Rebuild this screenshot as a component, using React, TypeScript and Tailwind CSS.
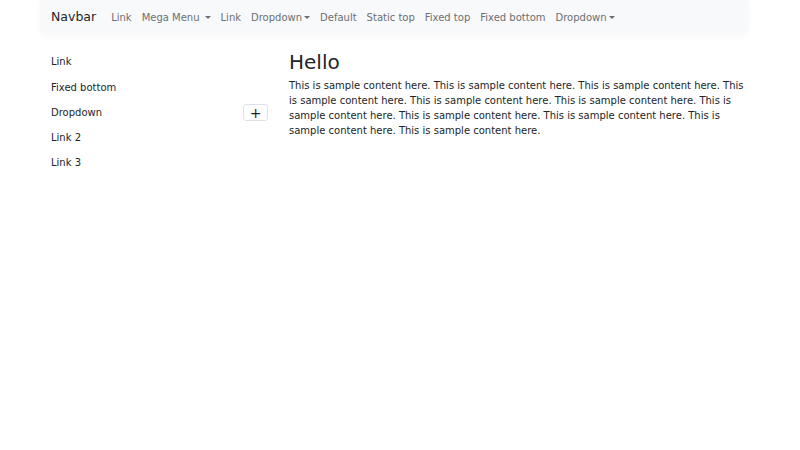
import React from "react";

const Caret = ({ gap }: { gap: string }) => (
  <span className={`inline-block ${gap} border-t-[3px] border-t-current border-x-[3px] border-x-transparent border-b-0`} />
);

export default function App() {
  const text = Array(11).fill("This is sample content here.").join(" ");
  return (
    <div className="min-h-[450px] bg-white text-[#212529]" style={{ fontFamily: '"DejaVu Sans", sans-serif' }}>
      <div className="mx-auto w-[720px] px-3">
        <nav className="-mx-3 w-[708px] h-[34px] bg-[#f8f9fa] rounded-b-md shadow-[0_2px_6px_rgba(0,0,0,0.04)] flex items-center pl-[11px]">
          <span className="text-[12.5px] text-[#212529] mr-[10px]">Navbar</span>
          <div className="flex items-center text-[10px] text-[#6c6f72]">
            <span className="px-[5px]">Link</span>
            <span className="px-[5px] flex items-center">Mega Menu<Caret gap="ml-[5px]" /></span>
            <span className="px-[5px]">Link</span>
            <span className="px-[5px] flex items-center">Dropdown<Caret gap="ml-[2px]" /></span>
            <span className="px-[5px]">Default</span>
            <span className="px-[5px]">Static top</span>
            <span className="px-[5px]">Fixed top</span>
            <span className="px-[5px]">Fixed bottom</span>
            <span className="px-[5px] flex items-center">Dropdown<Caret gap="ml-[2px]" /></span>
          </div>
        </nav>
        <div className="flex mt-[15px]">
          <div className="w-[217px] shrink-0 text-[10px] -ml-[1px]">
            <div className="h-[25px] mb-[1px] flex items-center">Link</div>
            <div className="h-[25px] flex items-center">Fixed bottom</div>
            <div className="h-[25px] flex items-center justify-between">
              <span>Dropdown</span>
              <span className="w-[25px] h-[17px] border border-[#dee2e6] rounded-[3px] flex items-center justify-center text-[14px] leading-none">+</span>
            </div>
            <div className="h-[25px] flex items-center">Link 2</div>
            <div className="h-[25px] flex items-center">Link 3</div>
          </div>
          <div className="ml-[21px] flex-1">
            <h1 className="text-[20px] leading-[24px] mt-[1px] mb-[4px]">Hello</h1>
            <p className="text-[10px] leading-[15px]">{text}</p>
          </div>
        </div>
      </div>
    </div>
  );
}
